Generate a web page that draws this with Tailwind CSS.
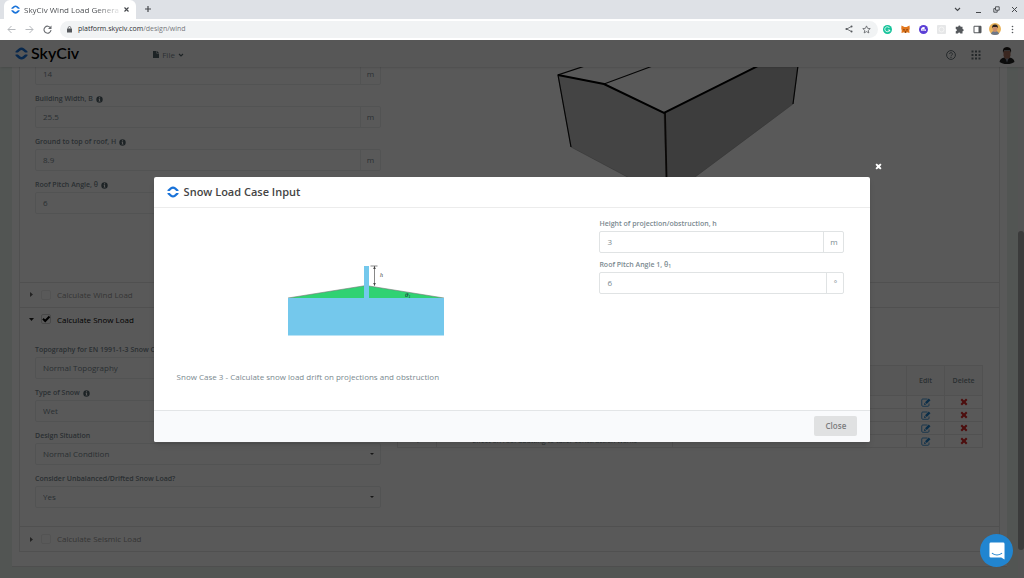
<!DOCTYPE html>
<html lang="en">
  <head>
    <meta charset="UTF-8" />
    <meta name="viewport" content="width=device-width, initial-scale=1.0" />
    <title>SkyCiv Wind Load Generator</title>
    <script src="https://cdn.jsdelivr.net/npm/@tailwindcss/browser@4"></script>
  </head>
  <body class="h-screen flex flex-col overflow-hidden bg-white font-['Open_Sans',sans-serif]">
    <!-- Shared shapes -->
    <svg class="hidden">
      <symbol id="logo" viewBox="0 0 24 24">
        <path d="M1 10V8L6.500 3Q12-1 17.500 3L23 8V10H18.500L14.800 6.700Q12 4.500 9.200 6.700L5.500 10Z" fill="currentColor" />
        <path d="M1 14V16L6.500 21Q12 25 17.500 21L23 16V14H18.500L14.800 17.300Q12 19.500 9.200 17.300L5.500 14Z" fill="currentColor" />
      </symbol>
      <symbol id="info" viewBox="0 0 12 12">
        <circle cx="6" cy="6" r="5.500" fill="currentColor" />
        <path d="M5.100 2.200h1.900v1.500H5.100zM4.400 4.800h2.600v3.600h.7v1.200H4.400V8.400h.7V6h-.7z" fill="#fff" />
      </symbol>
      <symbol id="edit" viewBox="0 0 20 18">
        <path d="M13 2H3.500A2 2 0 0 0 1.500 4v10.500a2 2 0 0 0 2 2H14a2 2 0 0 0 2-2V11" fill="none" stroke="currentColor" stroke-width="1.600" />
        <path d="m7 9.500-1 4.500 4.500-1zM8 8.500 15.500 1 19 4.500 11.500 12z" fill="currentColor" />
      </symbol>
      <symbol id="cross" viewBox="0 0 12 12">
        <path d="M3 .8 6 3.600 9 .8 11.200 3 8.400 6l2.800 3L9 11.200 6 8.400 3 11.200.8 9l2.800-3L.8 3z" fill="currentColor" />
      </symbol>
    </svg>

    <!-- Tab strip -->
    <div class="h-[19px] shrink-0 bg-[#dee1e6] flex items-end">
      <div class="ml-1 w-[132px] h-[19px] bg-white rounded-t-md flex items-center px-[7px] gap-1">
        <svg class="size-[9px] shrink-0 text-[#1a73d9]"><use href="#logo" /></svg>
        <span class="flex-1 whitespace-nowrap text-[8px] leading-[18px] text-transparent bg-clip-text bg-linear-to-r from-[#45484c] from-75% to-[#45484c]/10">SkyCiv Wind Load Genera</span>
        <button aria-label="Close tab">
          <svg class="size-[5px]" viewBox="0 0 10 10"><path d="M1 1 9 9M9 1 1 9" stroke="#45484c" stroke-width="2.200" /></svg>
        </button>
      </div>
      <button class="ml-2 mb-[6px]" aria-label="New tab">
        <svg class="size-[8px]" viewBox="0 0 8 8"><path d="M4 1v6M1 4h6" stroke="#45484c" stroke-width="1.200" /></svg>
      </button>
      <div class="ml-auto flex items-center gap-[11px] mr-[6px] mb-[6px]">
        <svg class="size-[7px] mr-[3px]" viewBox="0 0 7 7"><path d="M1 2l2.500 2.500L6 2" fill="none" stroke="#45484c" stroke-width="1.100" /></svg>
        <svg class="size-[7px]" viewBox="0 0 7 7"><path d="M1 6.500h5" stroke="#45484c" /></svg>
        <svg class="size-[7px]" viewBox="0 0 7 7"><path d="M2.500.8h3.700v3.400H2.500zM2.500 2.600H.8v3.600h3.400v-2" fill="none" stroke="#45484c" stroke-width=".9" /></svg>
        <svg class="size-[7px]" viewBox="0 0 7 7"><path d="M1 1l5 5M6 1 1 6" stroke="#45484c" stroke-width="1" /></svg>
      </div>
    </div>

    <!-- Address bar -->
    <div class="h-[21px] shrink-0 bg-white flex items-center pl-[7px] pr-[7px] pb-px">
      <div class="flex items-center gap-[9px] mr-2">
        <svg class="size-[9px]" viewBox="0 0 9 9"><path d="M8.500 4.500H1M4.500 1 1 4.500 4.500 8" fill="none" stroke="#b6b9bd" /></svg>
        <svg class="size-[9px]" viewBox="0 0 9 9"><path d="M.5 4.500H8M4.500 1 8 4.500 4.500 8" fill="none" stroke="#b6b9bd" /></svg>
        <svg class="size-[9px]" viewBox="0 0 9 9"><path d="M7.600 3A3.500 3.500 0 1 0 8 5" fill="none" stroke="#6a6d71" stroke-width="1.100" /><path d="M8.500.5V4H5z" fill="#6a6d71" /></svg>
      </div>
      <div class="flex-1 h-[17px] rounded-full bg-[#f1f3f4] flex items-center px-[7px]">
        <svg class="w-[5px] h-[7px] mr-[6px]" viewBox="0 0 10 14"><path d="M0 5h10v8H0z" fill="#55585c" /><path d="M2.500 5V3.500a2.500 2.500 0 0 1 5 0V5" fill="none" stroke="#55585c" stroke-width="1.500" /></svg>
        <span class="text-[7px] text-[#2d2f32]">platform.skyciv.com<span class="text-[#77797d]">/design/wind</span></span>
        <svg class="ml-auto size-[8px]" viewBox="0 0 14 14"><path d="M11.500 2.500 3 7l8.500 4.500" fill="none" stroke="#55585c" stroke-width="1.400" /><circle cx="11.500" cy="2.500" r="1.700" fill="#55585c" /><circle cx="2.500" cy="7" r="1.700" fill="#55585c" /><circle cx="11.500" cy="11.500" r="1.700" fill="#55585c" /></svg>
        <svg class="ml-[9px] size-[9px]" viewBox="0 0 18 18"><path d="m9 1.800 2.200 4.900 5.300.5-4 3.500 1.200 5.200L9 13.200l-4.700 2.700 1.200-5.200-4-3.500 5.300-.5z" fill="none" stroke="#55585c" stroke-width="1.500" /></svg>
      </div>
      <div class="flex items-center gap-[9px] ml-[5px]">
        <svg class="size-[9px]" viewBox="0 0 18 18"><circle cx="9" cy="9" r="9" fill="#15c39a" /><path d="M13 6A5 5 0 1 0 13.500 10H9.500M13.500 10v3" fill="none" stroke="#fff" stroke-width="1.700" /></svg>
        <svg class="size-[9px]" viewBox="0 0 18 18"><path d="m1 1 6 3h4l6-3 .5 6-1 4 .5 5-5-1.500-2 1.500H8l-2-1.500L1 16l.5-5-1-4z" fill="#e2761b" /><path d="m4 8 4 1-2 3zM14 8l-4 1 2 3z" fill="#763d16" /><path d="M7.500 13h3l-.5 2H8z" fill="#3b2414" /></svg>
        <svg class="size-[9px]" viewBox="0 0 18 18"><circle cx="9" cy="9" r="9" fill="#5b3fd6" /><path d="M4 9a5 5 0 0 1 8-4l-1 3 3 1v3H5z" fill="#fff" /><path d="M6 10h7" stroke="#5b3fd6" stroke-width="1.500" /></svg>
        <svg class="size-[9px]" viewBox="0 0 18 18"><rect width="18" height="18" rx="2" fill="#e6e7e8" /><circle cx="9" cy="9" r="5" fill="none" stroke="#f6f6f6" stroke-width="2" /></svg>
        <svg class="size-[9px]" viewBox="0 0 18 18"><path d="M6.500 3.500a2.300 2.300 0 0 1 4.600 0H15V8a2.300 2.300 0 0 1 0 4.600V17h-4.500a2.200 2.200 0 0 0-4.400 0H1.500v-4.500a2.200 2.200 0 0 0 0-4.400V3.500z" fill="#55585c" /></svg>
        <svg class="size-[9px]" viewBox="0 0 18 18"><path d="M2 2.500h14v13H2z" fill="none" stroke="#55585c" stroke-width="2" /><path d="M11 2h5v14h-5z" fill="#55585c" /></svg>
        <svg class="-mx-[2px] size-[12px]" viewBox="0 0 24 24"><circle cx="12" cy="12" r="12" fill="#e9b45c" /><path d="M4 22q1-6 8-6t8 6q-8 4-16 0" fill="#6d7788" /><path d="M7.500 8h9v5q-1 5-4.500 5t-4.500-5z" fill="#c98c6c" /><path d="M6.500 11Q5 3 12 3t5.500 8l-1.500-3H8z" fill="#2b2220" /></svg>
        <svg class="w-[9px] h-[9px]" viewBox="0 0 9 9" fill="#55585c"><circle cx="4.500" cy="1.500" r=".8" /><circle cx="4.500" cy="4.500" r=".8" /><circle cx="4.500" cy="7.500" r=".8" /></svg>
      </div>
    </div>

    <!-- Application -->
    <div class="relative flex-1 min-h-0 flex flex-col overflow-hidden bg-[#eaf4ee]">
      <header class="relative z-10 h-[27px] shrink-0 bg-[#fafafa] shadow-sm flex items-center pl-[15px] pr-2 text-[#7f8c93]">
        <a href="#" class="flex items-center gap-[3px] text-black">
          <svg class="size-[13px] text-[#1a73d9]"><use href="#logo" /></svg>
          <span class="font-['Lato',sans-serif] font-semibold text-[16px] leading-[20px] pb-[2px]">SkyCiv</span>
        </a>
        <button class="ml-[74px] mt-[2px] flex items-center gap-[3px] text-[8px]">
          <svg class="w-[6px] h-[7px]" viewBox="0 0 12 14"><path d="M0 0h7v5h5v9H0zM8 0l4 4H8z" fill="#55646c" /></svg>
          File
          <svg class="w-[6px] h-[6px]" viewBox="0 0 6 6"><path d="M1 2l2 2 2-2" fill="none" stroke="#55646c" stroke-width="1.200" /></svg>
        </button>
        <div class="ml-auto mt-[2px] flex items-center gap-[14px]">
          <svg class="size-[10px]" viewBox="0 0 20 20"><circle cx="10" cy="10" r="8.800" fill="none" stroke="#68747a" stroke-width="2" /><path d="M7.200 8a2.800 2.800 0 1 1 4 2.500q-1.200.6-1.200 2" fill="none" stroke="#68747a" stroke-width="1.900" /><circle cx="10" cy="14.800" r="1.200" fill="#68747a" /></svg>
          <svg class="size-[12px] mr-[2px]" viewBox="0 0 12 12" fill="#68747a"><path d="M1.500 1.500h2v2h-2zM5 1.500h2v2H5zM8.500 1.500h2v2h-2zM1.500 5h2v2h-2zM5 5h2v2H5zM8.500 5h2v2h-2zM1.500 8.500h2v2h-2zM5 8.500h2v2H5zM8.500 8.500h2v2h-2z" /></svg>
          <svg class="size-[18px]" viewBox="0 0 36 36"><path d="M3 32q1-8 10-9h10q9 1 10 9-15 9-30 0" fill="#222" /><path d="M11 10h14v9q-2 8-7 8t-7-8z" fill="#a5705c" /><path d="M10 14Q8 2 18 2t8 12l-2-5H12z" fill="#1b1513" /><path d="m15 25 3 8 3-8z" fill="#8a94a5" /></svg>
        </div>
      </header>

      <div class="flex-1 min-h-0 flex">
        <main class="flex-1 min-w-0 -mt-1 pl-3 pr-[11px]">
          <div class="bg-white border-b border-[#e0e0e0] px-[7px] pb-[14px]">
            <div class="border border-t-0 border-[#e4e4e4]">
              <!-- Building dimensions -->
              <section class="flex gap-4 h-[219px] pl-[15px] pr-4 text-[7px] text-[#7a898f]">
                <div class="w-[346px] shrink-0 flex flex-col gap-[5px]">
                  <div class="flex h-[22px] border border-[#ebedee] rounded-xs">
                    <input aria-label="Building Length, L" value="14" class="flex-1 min-w-0 px-[7px] text-[8px]" />
                    <span class="w-5 border-l border-[#ebedee] text-center text-[8px] leading-[20px]">m</span>
                  </div>
                  <div>
                    <label for="width" class="flex items-center gap-[3px] h-4 pt-[2px] font-semibold">Building Width, B <svg class="size-[7px] text-[#55646c]"><use href="#info" /></svg></label>
                    <div class="flex h-[22px] border border-[#ebedee] rounded-xs">
                      <input id="width" value="25.5" class="flex-1 min-w-0 px-[7px] text-[8px]" />
                      <span class="w-5 border-l border-[#ebedee] text-center text-[8px] leading-[20px]">m</span>
                    </div>
                  </div>
                  <div>
                    <label for="height" class="flex items-center gap-[3px] h-4 pt-[2px] font-semibold">Ground to top of roof, H <svg class="size-[7px] text-[#55646c]"><use href="#info" /></svg></label>
                    <div class="flex h-[22px] border border-[#ebedee] rounded-xs">
                      <input id="height" value="8.9" class="flex-1 min-w-0 px-[7px] text-[8px]" />
                      <span class="w-5 border-l border-[#ebedee] text-center text-[8px] leading-[20px]">m</span>
                    </div>
                  </div>
                  <div>
                    <label for="pitch" class="flex items-center gap-[3px] h-4 pt-[2px] font-semibold">Roof Pitch Angle, θ <svg class="size-[7px] text-[#55646c]"><use href="#info" /></svg></label>
                    <div class="flex h-[22px] border border-[#ebedee] rounded-xs">
                      <input id="pitch" value="6" class="flex-1 min-w-0 px-[7px] text-[8px]" />
                      <span class="w-5 border-l border-[#ebedee] text-center text-[8px] leading-[20px]">°</span>
                    </div>
                  </div>
                </div>
                <!-- Building preview -->
                <svg class="flex-1 min-w-0 h-[215px]" viewBox="397 63 586 215">
                  <path d="M558 75 604 84 664 113 667 198 571 147z" fill="#c4c4c4" stroke="#888" stroke-width=".5" />
                  <path d="M664 113 757 66 800 50 793 104 667 198z" fill="#b0b0b0" stroke="#888" stroke-width=".5" />
                  <path d="M571 147 558 75 600 61M604 84 658 64M793 104 800 50" fill="none" stroke="#111" stroke-width="1.200" />
                  <path d="M667 198 665 113" fill="none" stroke="#1a1512" stroke-width="1.800" />
                  <path d="M558 75 604 84 664 113 764 63" fill="none" stroke="#000" stroke-width="2" />
                </svg>
              </section>

              <!-- Wind load -->
              <label class="h-[25px] border-t border-[#e4e4e4] flex items-center pl-[9px] pb-px text-[8px] font-medium text-[#9a9a9a]">
                <svg class="size-[5px] mr-[7px]" viewBox="0 0 5 5"><path d="M1 0 4 2.500 1 5z" fill="#666" /></svg>
                <input type="checkbox" class="appearance-none size-[10px] border border-[#ededed] rounded-xs mr-[6px]" />
                Calculate Wind Load
              </label>

              <!-- Snow load -->
              <label class="h-[26px] border-t border-[#e4e4e4] flex items-center pl-[9px] pb-[2px] text-[8px] font-medium text-black">
                <svg class="size-[5px] mr-[7px]" viewBox="0 0 5 5"><path d="M0 1h5L2.500 4z" fill="#222" /></svg>
                <span class="grid mr-[6px] pb-[2px]">
                  <input type="checkbox" checked class="col-start-1 row-start-1 appearance-none size-[10px] border border-[#d0d0d0] rounded-xs" />
                  <svg class="col-start-1 row-start-1 size-[10px]" viewBox="0 0 10 10"><path d="M2 4.800 4.200 7 8.500 2.500" fill="none" stroke="#000" stroke-width="2" /></svg>
                </span>
                Calculate Snow Load
              </label>
              <section class="flex gap-4 pt-2 pb-[18px] pl-[15px] pr-4 text-[7px] text-[#7a898f]">
                <div class="w-[346px] shrink-0 flex flex-col gap-[5px]">
                  <div>
                    <label for="topography" class="flex items-center gap-[3px] h-4 pt-[2px] font-semibold">Topography for EN 1991-1-3 Snow Calculation</label>
                    <div class="grid">
                      <select id="topography" class="col-start-1 row-start-1 appearance-none h-[22px] border border-[#ebedee] rounded-xs px-[7px] text-[8px]">
                        <option>Normal Topography</option>
                      </select>
                      <svg class="col-start-1 row-start-1 justify-self-end self-center mr-[7px] size-1" viewBox="0 0 4 4"><path d="M0 1h4L2 3z" fill="#444" /></svg>
                    </div>
                  </div>
                  <div>
                    <label for="snow" class="flex items-center gap-[3px] h-4 pt-[2px] font-semibold">Type of Snow <svg class="size-[7px] text-[#55646c]"><use href="#info" /></svg></label>
                    <div class="grid">
                      <select id="snow" class="col-start-1 row-start-1 appearance-none h-[22px] border border-[#ebedee] rounded-xs px-[7px] text-[8px]">
                        <option>Wet</option>
                      </select>
                      <svg class="col-start-1 row-start-1 justify-self-end self-center mr-[7px] size-1" viewBox="0 0 4 4"><path d="M0 1h4L2 3z" fill="#444" /></svg>
                    </div>
                  </div>
                  <div>
                    <label for="situation" class="flex items-center gap-[3px] h-4 pt-[2px] font-semibold">Design Situation</label>
                    <div class="grid">
                      <select id="situation" class="col-start-1 row-start-1 appearance-none h-[22px] border border-[#ebedee] rounded-xs px-[7px] text-[8px]">
                        <option>Normal Condition</option>
                      </select>
                      <svg class="col-start-1 row-start-1 justify-self-end self-center mr-[7px] size-1" viewBox="0 0 4 4"><path d="M0 1h4L2 3z" fill="#444" /></svg>
                    </div>
                  </div>
                  <div>
                    <label for="drifted" class="flex items-center gap-[3px] h-4 pt-[2px] font-semibold">Consider Unbalanced/Drifted Snow Load?</label>
                    <div class="grid">
                      <select id="drifted" class="col-start-1 row-start-1 appearance-none h-[22px] border border-[#ebedee] rounded-xs px-[7px] text-[8px]">
                        <option>Yes</option>
                      </select>
                      <svg class="col-start-1 row-start-1 justify-self-end self-center mr-[7px] size-1" viewBox="0 0 4 4"><path d="M0 1h4L2 3z" fill="#444" /></svg>
                    </div>
                  </div>
                </div>

                <!-- Snow load cases -->
                <div class="flex-1 min-w-0 pt-6">
                  <table class="w-full table-fixed border-collapse text-center text-[7px] leading-[12px]">
                    <thead>
                      <tr class="h-[30px] bg-[#fafafa]">
                        <th class="w-[39px] border border-[#e8e8e8]"></th>
                        <th class="w-[236px] border border-[#e8e8e8]"></th>
                        <th class="border border-[#e8e8e8]"></th>
                        <th class="w-[38px] border border-[#e8e8e8] font-semibold">Edit</th>
                        <th class="w-[38px] border border-[#e8e8e8] font-semibold">Delete</th>
                      </tr>
                    </thead>
                    <tbody id="caseList"></tbody>
                  </table>
                </div>
              </section>

              <!-- Seismic load -->
              <label class="h-[25px] border-t border-[#e4e4e4] flex items-center pl-[9px] text-[8px] font-medium text-[#9a9a9a]">
                <svg class="size-[5px] mr-[7px]" viewBox="0 0 5 5"><path d="M1 0 4 2.500 1 5z" fill="#666" /></svg>
                <input type="checkbox" class="appearance-none size-[10px] border border-[#ededed] rounded-xs mr-[6px]" />
                Calculate Seismic Load
              </label>
            </div>
          </div>
        </main>
        <!-- Scrollbar -->
        <div class="w-[6px] bg-[#f1f1f1] pt-[164px]">
          <div class="h-[319px] rounded-full bg-[#a8a8a8]"></div>
        </div>
      </div>

      <!-- Modal -->
      <div class="absolute inset-0 z-20 bg-black/65 flex justify-center items-start pt-[137px]">
        <div role="dialog" aria-label="Snow Load Case Input" class="relative w-[70%] bg-white rounded-xs shadow-md text-[#7a898f]">
          <button id="closeIcon" class="absolute -top-[14px] -right-3 text-white" aria-label="Close">
            <svg class="size-[7px]"><use href="#cross" /></svg>
          </button>
          <div class="h-[31px] border-b border-[#ececec] flex items-center gap-[5px] pl-[13px]">
            <svg class="size-[12px] text-[#1a73d9]"><use href="#logo" /></svg>
            <h2 class="text-[11px] font-semibold text-[#444]">Snow Load Case Input</h2>
          </div>
          <div class="h-[202px] flex">
            <div class="flex-1 pl-[23px]">
              <svg class="ml-[110px] mt-[57px] w-[158px] h-[72px]" viewBox="0 0 158 72">
                <path d="M1 33 79 20.500 157 33z" fill="#30d273" />
                <path d="M1 33 79 20.500 157 33" fill="none" stroke="#777" stroke-width=".6" />
                <path d="M1 33h156v37.500H1zM77 1h5v33h-5z" fill="#74c8ec" />
                <path d="M83.500 1h7M87.500 1v19.500" stroke="#555" stroke-width=".7" />
                <path d="m86.200 4 1.300-3 1.300 3zM86.200 18l1.300 3 1.300-3z" fill="#444" />
                <text x="93" y="12" font-size="6" font-style="italic" fill="#333" font-family="Liberation Serif, serif">h</text>
                <text x="118" y="32" font-size="7" font-style="italic" fill="#123" font-family="Liberation Serif, serif">θ<tspan font-size="4" dy="1">1</tspan></text>
              </svg>
              <p class="mt-[33px] text-[8px] leading-[14px] font-medium">Snow Case 3 - Calculate snow load drift on projections and obstruction</p>
            </div>
            <div class="w-[245px] mr-[26px] pt-[9px] flex flex-col gap-[5px] text-[7px]">
              <div>
                <label for="projection" class="block h-[14px] leading-[14px] font-semibold">Height of projection/obstruction, h</label>
                <div class="flex h-[22px] border border-[#e0e3e4] rounded-xs">
                  <input id="projection" value="3" class="flex-1 min-w-0 px-[7px] text-[8px]" />
                  <span class="w-5 border-l border-[#e0e3e4] text-center text-[8px] leading-[20px]">m</span>
                </div>
              </div>
              <div>
                <label for="pitch1" class="block h-[14px] leading-[14px] font-semibold">Roof Pitch Angle 1, θ<sub class="text-[5px]">1</sub></label>
                <div class="flex h-[22px] border border-[#e0e3e4] rounded-xs">
                  <input id="pitch1" value="6" class="flex-1 min-w-0 px-[7px] text-[8px]" />
                  <span class="w-[17px] border-l border-[#e0e3e4] text-center text-[8px] leading-[20px]">°</span>
                </div>
              </div>
            </div>
          </div>
          <div class="h-8 border-t border-[#e3e5e7] bg-[#f9fafc] rounded-b-xs flex items-start justify-end pt-[5px] pr-[13px]">
            <button id="closeBtn" class="w-[43px] h-5 rounded-xs bg-[#e0e1e2] text-[8px] leading-[20px] font-semibold text-[#7b7c7d]">Close</button>
          </div>
        </div>
      </div>

      <!-- Chat launcher -->
      <button class="absolute z-30 right-[11px] bottom-[11px] size-[33px] rounded-full bg-[#2185d0] grid place-items-center" aria-label="Chat">
        <svg class="w-[16px] h-[18px]" viewBox="0 0 34 38"><path d="M4 1h26a3 3 0 0 1 3 3v33l-7-4H4a3 3 0 0 1-3-3V4a3 3 0 0 1 3-3z" fill="#fff" /><path d="M7 24q10 7 20 0" fill="none" stroke="#2185d0" stroke-width="2.200" stroke-linecap="round" /></svg>
      </button>
    </div>

    <script>
      const cases = ["", "", "", "Effect on roof abutting to taller construction works"];

      document.getElementById("caseList").innerHTML = cases
        .map(
          (name, i) => `
          <tr>
            <td class="border border-[#e8e8e8]">${i + 1}</td>
            <td class="border border-[#e8e8e8] whitespace-nowrap">${name}</td>
            <td class="border border-[#e8e8e8]"></td>
            <td class="border border-[#e8e8e8]">
              <button class="block mx-auto text-[#2185d0]" aria-label="Edit"><svg class="w-[10px] h-[9px]"><use href="#edit" /></svg></button>
            </td>
            <td class="border border-[#e8e8e8]">
              <button class="block mx-auto text-[#db2828]" aria-label="Delete"><svg class="size-[8px]"><use href="#cross" /></svg></button>
            </td>
          </tr>`
        )
        .join("");

      // Close the modal from the footer button or the corner icon
      function closeModal() {
        document.querySelector("[role=dialog]").parentElement.remove();
      }
      document.getElementById("closeBtn").addEventListener("click", closeModal);
      document.getElementById("closeIcon").addEventListener("click", closeModal);
    </script>
  </body>
</html>
